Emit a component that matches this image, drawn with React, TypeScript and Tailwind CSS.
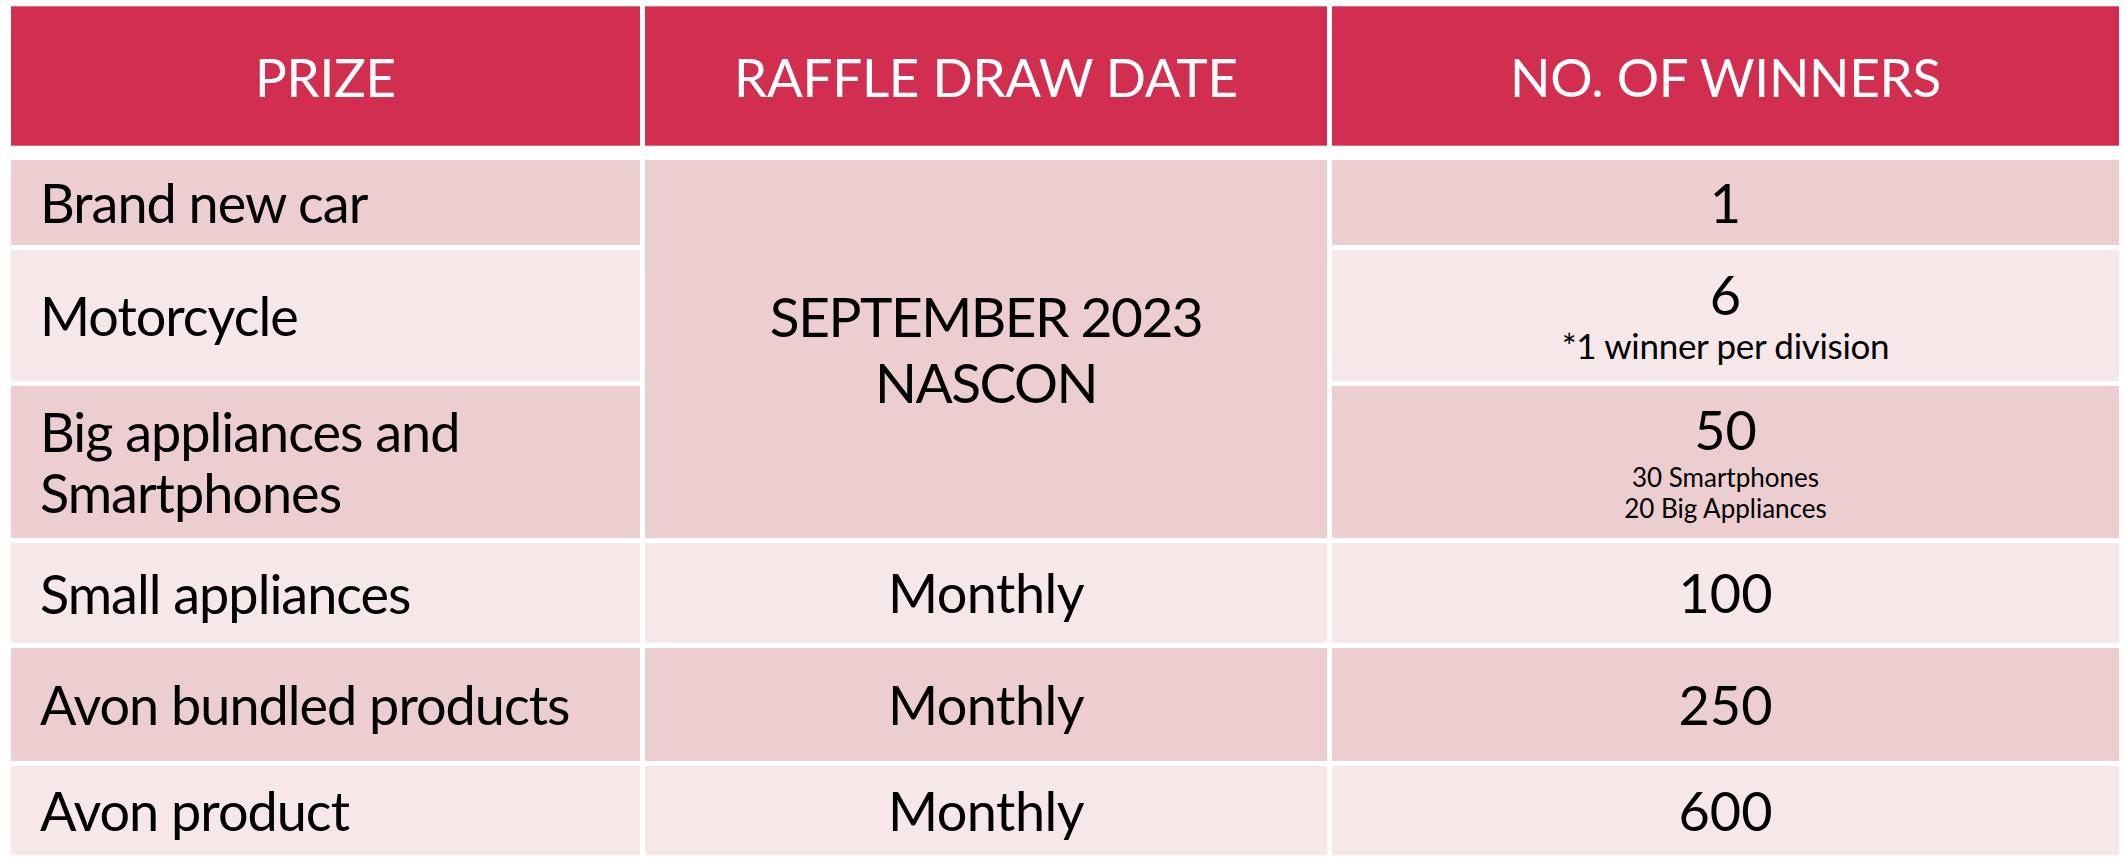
const DARK = 'bg-[#eccdd0]'
const LIGHT = 'bg-[#f6e7e8]'

type Row = {
  prize: string[]
  draw?: string
  winners: string
  note?: string[]
  noteSize?: 'md' | 'sm'
  dark: boolean
}

const ROWS: Row[] = [
  { prize: ['Brand new car'], winners: '1', dark: true },
  { prize: ['Motorcycle'], winners: '6', note: ['*1 winner per division'], noteSize: 'md', dark: false },
  {
    prize: ['Big appliances and', 'Smartphones'],
    winners: '50',
    note: ['30 Smartphones', '20 Big Appliances'],
    noteSize: 'sm',
    dark: true,
  },
  { prize: ['Small appliances'], draw: 'Monthly', winners: '100', dark: false },
  { prize: ['Avon bundled products'], draw: 'Monthly', winners: '250', dark: true },
  { prize: ['Avon product'], draw: 'Monthly', winners: '600', dark: false },
]

const HEADERS = ['PRIZE', 'RAFFLE DRAW DATE', 'NO. OF WINNERS']

export default function App() {
  return (
    <div className="min-h-screen bg-white pt-[6px] pl-[11px] font-['Lato','Liberation_Sans',sans-serif] text-black">
      <div className="grid w-[2108px] grid-cols-[629px_682px_787px] grid-rows-[149px_85px_131px_152px_100px_113px_89px] gap-[5px]">
        {/* Header */}
        {HEADERS.map(h => (
          <div
            key={h}
            className="mb-[9px] flex items-center justify-center border-y border-[#dc6a83] bg-[#d22e4f] text-[53px] leading-none tracking-[-0.3px] text-white"
          >
            {h}
          </div>
        ))}

        {ROWS.map((row, i) => (
          <>
            {/* Prize */}
            <div
              key={`p${i}`}
              className={`flex flex-col justify-center pl-[29px] text-[54px] leading-[61px] tracking-[-1px] ${row.dark ? DARK : LIGHT}`}
            >
              {row.prize.map(line => (
                <span key={line}>{line}</span>
              ))}
            </div>

            {/* Draw date — first three rows share one cell */}
            {i === 0 && (
              <div
                key="draw-merged"
                className={`row-span-3 flex flex-col items-center justify-center text-[55px] leading-[66px] tracking-[-1.5px] ${DARK}`}
              >
                <span>SEPTEMBER 2023</span>
                <span>NASCON</span>
              </div>
            )}
            {row.draw && (
              <div
                key={`d${i}`}
                className={`flex items-center justify-center text-[54px] leading-none tracking-[-0.5px] ${row.dark ? DARK : LIGHT}`}
              >
                {row.draw}
              </div>
            )}

            {/* Winners */}
            <div
              key={`w${i}`}
              className={`flex flex-col items-center justify-center ${row.dark ? DARK : LIGHT}`}
            >
              <span className="text-[54px] leading-[58px]">{row.winners}</span>
              {row.note?.map((n, j) => (
                <span
                  key={n}
                  className={
                    row.noteSize === 'md'
                      ? 'text-[35px] leading-[42px] tracking-[-0.3px]'
                      : `text-[26px] leading-[31px] ${j === 0 ? 'mt-[3px]' : ''}`
                  }
                >
                  {n}
                </span>
              ))}
            </div>
          </>
        ))}
      </div>
    </div>
  )
}
